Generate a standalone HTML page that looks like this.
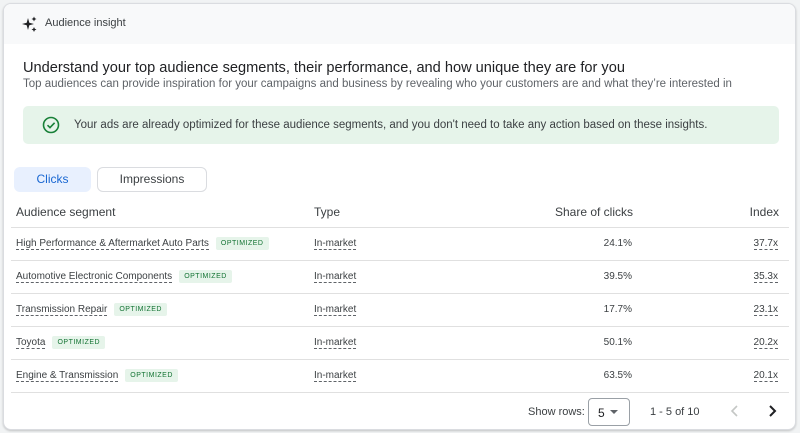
<!DOCTYPE html>
<html><head><style>
*{box-sizing:border-box;margin:0;padding:0}
body{width:800px;height:433px;background:#f1f3f4;font-family:"Liberation Sans",Arial,sans-serif;color:#3c4043;position:relative;overflow:hidden}
.card{position:absolute;left:3px;top:3px;width:793px;height:427px;background:#fff;border:1px solid #dadce0;border-radius:8px;box-shadow:0 1px 2px rgba(0,0,0,.2);overflow:hidden}
.hdr{height:40px;background:#f8f9fa;position:relative;font-size:11px;color:#3c4043}
.hdr span{position:absolute;left:41px;top:13px}
.a{position:absolute;white-space:nowrap}
.u{border-bottom:1px dashed #5f6368}
.tag{display:inline-block;background:#e6f4ea;color:#137333;font-size:7px;letter-spacing:.5px;padding:3px 5px;margin-left:7px;vertical-align:1px;border-radius:2px}
.line{position:absolute;left:7px;width:778px;height:1px;background:#e0e0e0}
.row{font-size:10px;color:#3c4043}
.h{font-size:12px;top:201px}
</style></head><body>
<div class="card">
<div class="hdr">
<svg style="position:absolute;left:18px;top:11px" width="18" height="18" viewBox="0 0 18 18"><path d="M6 3 L7.3 7.7 L12 9 L7.3 10.3 L6 15 L4.7 10.3 L0 9 L4.7 7.7Z" fill="#202124"/><path d="M12 1.5 L12.8 3.2 L14.5 4 L12.8 4.8 L12 6.5 L11.2 4.8 L9.5 4 L11.2 3.2Z" fill="#202124"/><path d="M12 12 L12.8 13.7 L14.5 14.5 L12.8 15.3 L12 17 L11.2 15.3 L9.5 14.5 L11.2 13.7Z" fill="#202124"/></svg>
<span>Audience insight</span></div>
<div class="a" style="left:19px;top:56px;font-size:14.6px;color:#202124">Understand your top audience segments, their performance, and how unique they are for you</div>
<div class="a" style="left:19px;top:74px;font-size:11.5px;color:#5f6368">Top audiences can provide inspiration for your campaigns and business by revealing who your customers are and what they’re interested in</div>
<div class="a" style="left:19px;top:102px;width:756px;height:38px;background:#e6f4ea;border-radius:5px"></div>
<svg class="a" style="left:38px;top:112px" width="18" height="18" viewBox="0 0 18 18"><circle cx="9" cy="9" r="7.5" fill="none" stroke="#188038" stroke-width="1.6"/><path d="M5.5 9.2 L8 11.6 L12.6 6.8" fill="none" stroke="#188038" stroke-width="1.6"/></svg>
<div class="a" style="left:70px;top:115px;font-size:11.5px;color:#3c4043">Your ads are already optimized for these audience segments, and you don't need to take any action based on these insights.</div>
<div class="a" style="left:10px;top:163px;width:77px;height:25px;background:#e8f0fe;border-radius:6px;color:#1967d2;font-size:12px;text-align:center;line-height:25px">Clicks</div>
<div class="a" style="left:93px;top:163px;width:110px;height:25px;border:1px solid #dadce0;border-radius:6px;color:#3c4043;font-size:12px;text-align:center;line-height:23px">Impressions</div>
<div class="a row h" style="left:12px">Audience segment</div>
<div class="a row h" style="left:310px">Type</div>
<div class="a row h" style="right:162px">Share of clicks</div>
<div class="a row h" style="right:16px">Index</div>
<div class="line" style="top:223px"></div>
<div class="a row" style="left:12px;top:233px"><span class="u">High Performance &amp; Aftermarket Auto Parts</span><span class="tag">OPTIMIZED</span></div>
<div class="a row" style="left:310px;top:234px"><span class="u">In-market</span></div>
<div class="a row" style="right:163px;top:234px">24.1%</div>
<div class="a row" style="right:17px;top:234px"><span class="u">37.7x</span></div>
<div class="line" style="top:256px"></div>
<div class="a row" style="left:12px;top:266px"><span class="u">Automotive Electronic Components</span><span class="tag">OPTIMIZED</span></div>
<div class="a row" style="left:310px;top:267px"><span class="u">In-market</span></div>
<div class="a row" style="right:163px;top:267px">39.5%</div>
<div class="a row" style="right:17px;top:267px"><span class="u">35.3x</span></div>
<div class="line" style="top:289px"></div>
<div class="a row" style="left:12px;top:299px"><span class="u">Transmission Repair</span><span class="tag">OPTIMIZED</span></div>
<div class="a row" style="left:310px;top:300px"><span class="u">In-market</span></div>
<div class="a row" style="right:163px;top:300px">17.7%</div>
<div class="a row" style="right:17px;top:300px"><span class="u">23.1x</span></div>
<div class="line" style="top:322px"></div>
<div class="a row" style="left:12px;top:332px"><span class="u">Toyota</span><span class="tag">OPTIMIZED</span></div>
<div class="a row" style="left:310px;top:333px"><span class="u">In-market</span></div>
<div class="a row" style="right:163px;top:333px">50.1%</div>
<div class="a row" style="right:17px;top:333px"><span class="u">20.2x</span></div>
<div class="line" style="top:355px"></div>
<div class="a row" style="left:12px;top:365px"><span class="u">Engine &amp; Transmission</span><span class="tag">OPTIMIZED</span></div>
<div class="a row" style="left:310px;top:366px"><span class="u">In-market</span></div>
<div class="a row" style="right:163px;top:366px">63.5%</div>
<div class="a row" style="right:17px;top:366px"><span class="u">20.1x</span></div>
<div class="line" style="top:388px"></div>
<div class="a row" style="left:524px;top:402px;font-size:11px">Show rows:</div>
<div class="a" style="left:584px;top:394px;width:42px;height:28px;border:1px solid #9aa0a6;border-radius:4px;font-size:12px;padding:7px 0 0 9px;color:#202124">5<span style="position:absolute;left:21px;top:11px;border:4px solid transparent;border-top:4px solid #5f6368"></span></div>
<div class="a row" style="left:646px;top:402px;font-size:11px">1 - 5 of 10</div>
<svg class="a" style="left:724px;top:399px" width="14" height="16" viewBox="0 0 14 16"><path d="M9 3 L4 8 L9 13" fill="none" stroke="#c4c7c5" stroke-width="1.6"/></svg>
<svg class="a" style="left:761px;top:399px" width="14" height="16" viewBox="0 0 14 16"><path d="M5 3 L10 8 L5 13" fill="none" stroke="#202124" stroke-width="2"/></svg>
</div>
</body></html>
